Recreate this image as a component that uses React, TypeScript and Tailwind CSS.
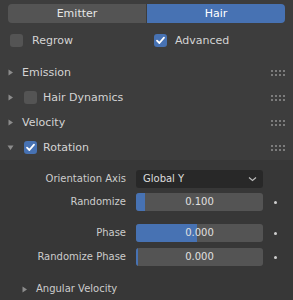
const font = { fontFamily: '"DejaVu Sans", "Liberation Sans", sans-serif' };

function Arrow({ open = false }: { open?: boolean }) {
  return (
    <svg width="7" height="7" viewBox="0 0 7 7" className="shrink-0">
      {open ? <path d="M0.5 1.5 L6.5 1.5 L3.5 6 Z" fill="#8c8c8c" /> : <path d="M1.5 0.5 L6 3.5 L1.5 6.5 Z" fill="#8c8c8c" />}
    </svg>
  );
}

function Check({ on }: { on: boolean }) {
  return (
    <div className={`flex h-[13px] w-[13px] shrink-0 items-center justify-center rounded-[3px] ${on ? 'bg-[#4772b3]' : 'bg-[#545454]'}`}>
      {on && (
        <svg width="11" height="11" viewBox="0 0 11 11">
          <path d="M2 5.6 L4.4 8 L9 2.6" stroke="#ffffff" strokeWidth="1.8" fill="none" strokeLinecap="round" strokeLinejoin="round" />
        </svg>
      )}
    </div>
  );
}

function Grip() {
  return (
    <div className="grid grid-cols-4 gap-x-[2px] gap-y-[2px]">
      {[0, 1, 2, 3, 4, 5, 6, 7].map((i) => (
        <div key={i} className="h-[2px] w-[2px] bg-[#7c7c7c]" />
      ))}
    </div>
  );
}

function Header({ title, check, open }: { title: string; check?: boolean; open?: boolean }) {
  return (
    <div className="flex h-[25px] items-center pl-[7px] pr-[8px]">
      <Arrow open={open} />
      {check === undefined ? (
        <span className="ml-[8px] text-[11px] text-[#d4d4d4]">{title}</span>
      ) : (
        <>
          <div className="ml-[10px]"><Check on={check} /></div>
          <span className="ml-[6px] text-[11px] text-[#d4d4d4]">{title}</span>
        </>
      )}
      <div className="ml-auto"><Grip /></div>
    </div>
  );
}

function Slider({ label, value, fill }: { label: string; value: string; fill: number }) {
  return (
    <div className="flex h-[18px] items-center">
      <span className="w-[136px] pr-[10px] text-right text-[#cccccc]">{label}</span>
      <div className="relative h-[18px] w-[127px] overflow-hidden rounded-[3px] bg-[#545454]">
        <div className="absolute inset-y-0 left-0 bg-[#4772b3]" style={{ width: fill }} />
        <span className="relative flex h-full items-center justify-center text-[#e0e0e0]">{value}</span>
      </div>
      <div className="ml-[11px] h-[3px] w-[3px] rounded-full bg-[#cfcfcf]" />
    </div>
  );
}

export default function App() {
  return (
    <div className="h-[300px] w-[293px] overflow-hidden bg-[#3d3d3d] text-[10px] leading-none" style={font}>
      <div className="mx-[8px] mt-[4px] flex h-[19px] overflow-hidden rounded-[4px] text-[11px]">
        <div className="flex flex-1 items-center justify-center border-r border-[#3d3d3d] bg-[#545454] text-[#e6e6e6]">Emitter</div>
        <div className="flex flex-1 items-center justify-center bg-[#4772b3] text-[#ffffff]">Hair</div>
      </div>
      <div className="mt-[10px] flex h-[14px] items-center text-[11px]">
        <div className="flex w-[154px] items-center pl-[10px]">
          <Check on={false} />
          <span className="ml-[9px] text-[#d4d4d4]">Regrow</span>
        </div>
        <div className="flex items-center">
          <Check on={true} />
          <span className="ml-[8px] text-[#d4d4d4]">Advanced</span>
        </div>
      </div>
      <div className="mt-[13px]">
        <Header title="Emission" />
        <Header title="Hair Dynamics" check={false} />
        <Header title="Velocity" />
        <Header title="Rotation" check={true} open />
      </div>
      <div className="h-[140px] bg-[#373737] pt-[10px]">
        <div className="flex h-[18px] items-center">
          <span className="w-[136px] pr-[10px] text-right text-[#cccccc]">Orientation Axis</span>
          <div className="flex h-[18px] w-[127px] items-center rounded-[3px] bg-[#282828] pl-[7px] pr-[6px] text-[#dcdcdc]">
            <span>Global Y</span>
            <svg width="9" height="6" viewBox="0 0 9 6" className="ml-auto">
              <path d="M1 1.5 L4.5 4.5 L8 1.5" stroke="#bdbdbd" strokeWidth="1.2" fill="none" />
            </svg>
          </div>
        </div>
        <div className="mt-[5px]">
          <Slider label="Randomize" value="0.100" fill={9} />
        </div>
        <div className="mt-[13px]">
          <Slider label="Phase" value="0.000" fill={61} />
        </div>
        <div className="mt-[6px]">
          <Slider label="Randomize Phase" value="0.000" fill={2} />
        </div>
        <div className="mt-[14px] flex h-[18px] items-center pl-[21px]">
          <Arrow />
          <span className="ml-[8px] text-[#cccccc]">Angular Velocity</span>
        </div>
      </div>
    </div>
  );
}
